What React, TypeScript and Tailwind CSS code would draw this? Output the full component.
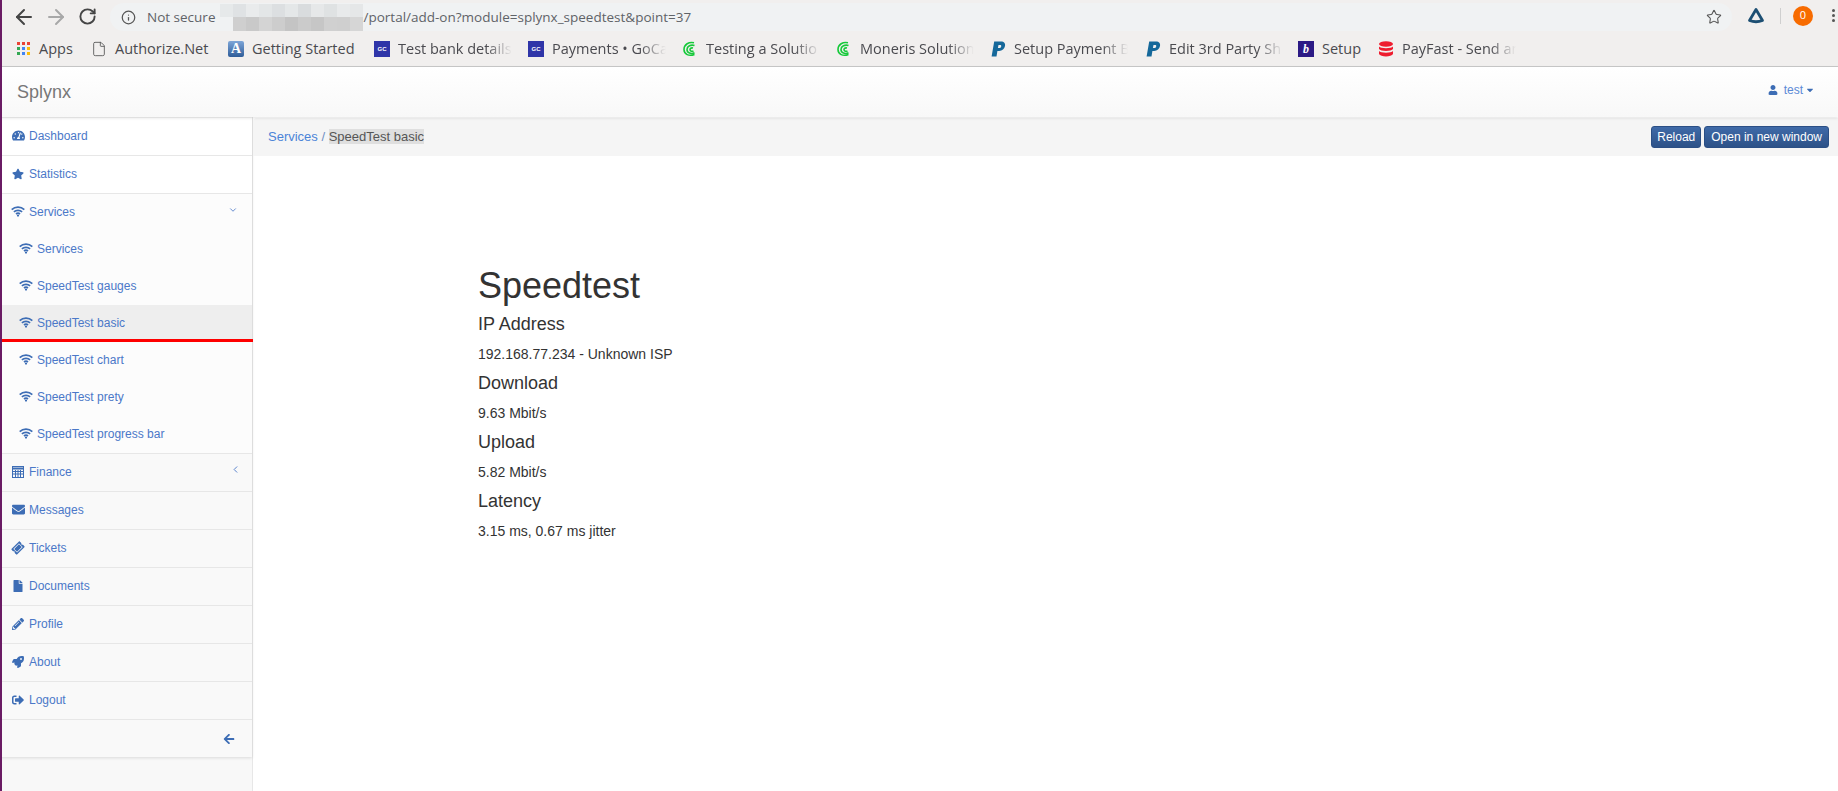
import { ArrowLeft, ArrowRight, RotateCw, Info, Star, File, ChevronDown, ChevronLeft } from 'lucide-react';
import {
    FaTachometerAlt,
    FaStar,
    FaEnvelope,
    FaTicketAlt,
    FaFile,
    FaPencilAlt,
    FaRocket,
    FaSignOutAlt,
    FaArrowLeft,
    FaUser,
    FaCaretDown,
} from 'react-icons/fa';
import type { ReactNode } from 'react';

function WifiIcon({ className = '' }: { className?: string }) {
    return (
        <svg width="14" height="11" viewBox="0 0 14 11" fill="none" stroke="#3d6db5" strokeWidth="1.7" className={className}>
            <path d="M0.7 3.6C4.2 0.3 9.8 0.3 13.3 3.6" />
            <path d="M2.9 5.9C5.2 3.8 8.8 3.8 11.1 5.9" />
            <path d="M5 8C6.1 7.1 7.9 7.1 9 8" />
            <circle cx="7" cy="9.6" r="1.1" fill="#3d6db5" stroke="none" />
        </svg>
    );
}

function CalcIcon() {
    return (
        <svg width="12" height="12" viewBox="0 0 12 12" fill="none" stroke="#3d6db5" strokeWidth="1">
            <rect x="0.5" y="0.5" width="11" height="11" />
            <path d="M1 2.5h10" strokeWidth="2" />
            <path d="M1 5.5h10M1 8h10M3.5 4V11M6 4V11M8.5 4V11" />
        </svg>
    );
}

function Favicon({ kind }: { kind: string }) {
    if (kind === 'apps') {
        const colors = ['#ea4335', '#ea4335', '#ea4335', '#34a853', '#4285f4', '#fbbc05', '#34a853', '#4285f4', '#fbbc05'];
        return (
            <span className="grid grid-cols-3 gap-[2px] w-[13px] h-[13px]">
                {colors.map((c, i) => (
                    <span key={i} className="w-[3px] h-[3px]" style={{ backgroundColor: c }} />
                ))}
            </span>
        );
    }
    if (kind === 'file') return <File size={16} strokeWidth={1.3} className="text-[#555]" />;
    if (kind === 'a')
        return (
            <span className="w-[16px] h-[16px] rounded-[2px] bg-gradient-to-b from-[#7ea6d8] to-[#2f5d99] text-white text-[14px] leading-[16px] text-center font-['Liberation_Serif',serif] font-bold">
                A
            </span>
        );
    if (kind === 'gc')
        return (
            <span className="w-[16px] h-[16px] bg-[#2f35a8] text-white text-[6px] leading-[16px] text-center font-bold font-['Liberation_Sans',sans-serif]">
                GC
            </span>
        );
    if (kind === 'moneris')
        return (
            <svg width="16" height="16" viewBox="0 0 16 16" fill="none" stroke="#16c93a" strokeWidth="1.6">
                <path d="M12 1.8C7 0.5 2 3.5 2 8.5s5 7 10.5 5" />
                <path d="M12.5 4.5C9 3.4 5 5 5 8.5s4 5 7.5 3.2" />
                <path d="M11 7C9 6.5 8 7.5 8 8.8s2 2 3.5 1" />
            </svg>
        );
    if (kind === 'paypal')
        return (
            <svg width="16" height="16" viewBox="0 0 16 16" fill="#15689a">
                <path
                    fillRule="evenodd"
                    d="M4.2 0.5H11c3 0 4.6 1.8 4 4.6C14.4 8.2 12.2 10 9.2 10H7.4L6.5 15.5H1.6ZM8.5 4 7.9 7H9c1.2 0 2-.7 2.2-1.6C11.4 4.5 10.9 4 10 4Z"
                />
            </svg>
        );
    if (kind === 'b')
        return (
            <span className="w-[16px] h-[16px] bg-[#2c1a85] text-white text-[12px] leading-[16px] text-center italic font-bold font-['Liberation_Serif',serif]">
                b
            </span>
        );
    return (
        <svg width="16" height="16" viewBox="0 0 16 16" fill="#ee1c2e">
            <ellipse cx="8" cy="3" rx="7" ry="2.8" />
            <path d="M1 5.5c1.5 2.2 12.5 2.2 14 0v2.6c-1.5 2.6-12.5 2.6-14 0z" />
            <path d="M1 10c1.5 2.2 12.5 2.2 14 0v3c-1.5 3.2-12.5 3.2-14 0z" />
        </svg>
    );
}

const bookmarks = [
    { kind: 'apps', label: 'Apps', w: 'w-[76px]' },
    { kind: 'file', label: 'Authorize.Net', w: 'w-[137px]' },
    { kind: 'a', label: 'Getting Started', w: 'w-[146px]' },
    { kind: 'gc', label: 'Test bank details', w: 'w-[154px]', fade: true },
    { kind: 'gc', label: 'Payments • GoCa', w: 'w-[154px]', fade: true },
    { kind: 'moneris', label: 'Testing a Solutio', w: 'w-[154px]', fade: true },
    { kind: 'moneris', label: 'Moneris Solution', w: 'w-[154px]', fade: true },
    { kind: 'paypal', label: 'Setup Payment B', w: 'w-[155px]', fade: true },
    { kind: 'paypal', label: 'Edit 3rd Party Sh', w: 'w-[153px]', fade: true },
    { kind: 'b', label: 'Setup', w: 'w-[80px]' },
    { kind: 'db', label: 'PayFast - Send an', w: 'w-[154px]', fade: true },
];

const blurTop = ['#e6e9ea', '#dfe2e4', '#e9ebec', '#e3e6e7', '#dcdfe1', '#e4e7e8', '#d9dcde', '#e6e8e9', '#dfe2e3', '#e8eaeb', '#e5e7e8'];
const blurBottom = ['#f0f2f3', '#cfcfcf', '#c9c9c9', '#d4d4d4', '#cdcdcd', '#c4c4c4', '#cbcbcb', '#c6c6c6', '#d0d0d0', '#cfcfcf', '#d6d6d6'];

function Bookmark({ kind, label, w, fade }: { kind: string; label: string; w: string; fade?: boolean }) {
    return (
        <div className={`flex items-center gap-[8px] shrink-0 ${w}`}>
            <span className="w-[16px] h-[16px] flex items-center justify-center shrink-0">
                <Favicon kind={kind} />
            </span>
            <span
                className={`text-[14.5px] text-[#4a4a4f] whitespace-nowrap ${
                    fade ? 'w-[114px] [mask-image:linear-gradient(to_left,transparent,black_26px)]' : ''
                }`}
            >
                {label}
            </span>
        </div>
    );
}

function NavRow({ icon, label, right, bordered = true }: { icon: ReactNode; label: string; right?: ReactNode; bordered?: boolean }) {
    return (
        <div className={`flex items-center pl-[11px] pr-[14px] pb-[2px] ${bordered ? 'h-[38px] border-b border-[#e7e7e7]' : 'h-[37px]'}`}>
            <span className="w-[14px] h-[14px] mr-[4px] flex items-center justify-center shrink-0">{icon}</span>
            <span className="flex-1">{label}</span>
            {right}
        </div>
    );
}

function SubRow({ label, active }: { label: string; active?: boolean }) {
    return (
        <div className={`h-[37px] pb-[2px] flex items-center pl-[19px] ${active ? 'bg-[#eeeeee]' : ''}`}>
            <WifiIcon className="mr-[4px]" />
            <span>{label}</span>
        </div>
    );
}

export default function App() {
    return (
        <div className="h-[791px] w-[1838px] overflow-hidden flex flex-col bg-white relative font-['Liberation_Sans',sans-serif]">
            {/* browser chrome */}
            <div className="h-[31px] bg-[#f1efee] flex items-center font-['Open_Sans',sans-serif] shrink-0">
                <div className="flex items-center pl-[12px] mt-[2px] w-[110px] shrink-0">
                    <ArrowLeft size={24} strokeWidth={2} className="text-[#454545]" />
                    <ArrowRight size={24} strokeWidth={2} className="ml-[8px] text-[#a8a8a8]" />
                    <RotateCw size={19} strokeWidth={2.4} className="ml-[10px] text-[#454545]" />
                </div>
                <div className="w-[1622px] h-[28px] mt-[3px] rounded-full bg-[#f0f2f3] flex items-center relative shrink-0">
                    <Info size={15} className="ml-[11px] text-[#555]" />
                    <span className="ml-[11px] text-[13.5px] text-[#5f6368]">Not secure</span>
                    <div className="ml-[5px] w-[143px] h-[27px] flex flex-col">
                        <div className="h-[13px] flex">
                            {blurTop.map((c, i) => (
                                <span key={i} className="w-[13px]" style={{ backgroundColor: c }} />
                            ))}
                        </div>
                        <div className="h-[14px] flex">
                            {blurBottom.map((c, i) => (
                                <span key={i} className="w-[13px]" style={{ backgroundColor: c }} />
                            ))}
                        </div>
                    </div>
                    <span className="text-[13.5px] text-[#5f6368]">/portal/add-on?module=splynx_speedtest&amp;point=37</span>
                    <Star size={16} strokeWidth={1.6} className="absolute right-[10px] top-[6px] text-[#555]" />
                </div>
                <div className="flex-1 flex items-center">
                    <svg width="18" height="18" viewBox="0 0 18 18" className="ml-[15px]" fill="none" stroke="#1d4f73" strokeWidth="2.8">
                        <path d="M9 2.5 L15.5 13.5 Q9 16 2.5 13.5 Z" strokeLinejoin="round" />
                    </svg>
                    <span className="w-px h-[16px] bg-[#cfcfcf] ml-[15px]" />
                    <span className="ml-[12px] w-[20px] h-[20px] rounded-full bg-[#f76b00] text-white text-[11px] flex items-center justify-center">0</span>
                    <span className="ml-[19px] flex flex-col gap-[2px]">
                        <span className="w-[3px] h-[3px] rounded-full bg-[#555]" />
                        <span className="w-[3px] h-[3px] rounded-full bg-[#555]" />
                        <span className="w-[3px] h-[3px] rounded-full bg-[#555]" />
                    </span>
                </div>
            </div>
            <div className="h-[36px] bg-[#f1efee] border-b border-[#c9c9c9] flex items-center pl-[15px] font-['Open_Sans',sans-serif] shrink-0">
                {bookmarks.map((b) => (
                    <Bookmark key={b.kind + b.label} {...b} />
                ))}
            </div>

            {/* app header */}
            <div className="h-[50px] bg-gradient-to-b from-white to-[#f8f8f8] flex items-center justify-between pl-[17px] pr-[23px] shadow-[0_1px_3px_rgba(0,0,0,0.12)] relative z-10 shrink-0">
                <span className="text-[18px] text-[#777]">Splynx</span>
                <span className="flex items-center text-[12px] text-[#5b8ad6] -mt-[5px]">
                    <FaUser size={10} className="mr-[6px] text-[#3d6db5]" />
                    test
                    <FaCaretDown size={10} className="ml-[2px] text-[#3d6db5]" />
                </span>
            </div>

            <div className="flex-1 flex min-h-0">
                {/* sidebar */}
                <div className="w-[253px] pt-[1px] bg-[#f8f8f8] border-r border-[#e7e7e7] shrink-0 text-[12px] text-[#4b78c8]">
                    <div className="shadow-[0_1px_3px_rgba(0,0,0,0.12)] bg-[#f9f9f9]">
                        <div className="bg-white">
                            <NavRow icon={<FaTachometerAlt size={13} className="text-[#3d6db5]" />} label="Dashboard" />
                            <NavRow icon={<FaStar size={12} className="text-[#3d6db5]" />} label="Statistics" />
                        </div>
                        <div className="bg-[#fcfcfc] border-b border-[#e7e7e7]">
                            <NavRow
                                icon={<WifiIcon />}
                                label="Services"
                                bordered={false}
                                right={<ChevronDown size={10} className="-mt-[4px]" />}
                            />
                            <SubRow label="Services" />
                            <SubRow label="SpeedTest gauges" />
                            <SubRow label="SpeedTest basic" active />
                            <div className="h-[3px] -mt-[3px] -mr-px relative bg-[#fe0000]" />
                            <SubRow label="SpeedTest chart" />
                            <SubRow label="SpeedTest prety" />
                            <SubRow label="SpeedTest progress bar" />
                        </div>
                        <NavRow icon={<CalcIcon />} label="Finance" right={<ChevronLeft size={11} className="-mt-[4px] -mr-[3px]" />} />
                        <NavRow icon={<FaEnvelope size={13} className="text-[#3d6db5]" />} label="Messages" />
                        <NavRow icon={<FaTicketAlt size={12} className="text-[#3d6db5] -rotate-45" />} label="Tickets" />
                        <NavRow icon={<FaFile size={12} className="text-[#3d6db5]" />} label="Documents" />
                        <NavRow icon={<FaPencilAlt size={12} className="text-[#3d6db5]" />} label="Profile" />
                        <NavRow icon={<FaRocket size={12} className="text-[#3d6db5]" />} label="About" />
                        <NavRow icon={<FaSignOutAlt size={12} className="text-[#3d6db5]" />} label="Logout" />
                        <div className="h-[37px] flex items-center justify-end pr-[17px]">
                            <FaArrowLeft size={12} className="text-[#3d6db5]" />
                        </div>
                    </div>
                </div>

                {/* content */}
                <div className="flex-1 min-w-0 pt-[1px]">
                    <div className="h-[38px] bg-[#f5f5f5] rounded-tl-[4px] flex items-center justify-between pl-[15px] pr-[9px]">
                        <div className="text-[13px]">
                            <span className="text-[#4b84d8]">Services</span>
                            <span className="text-[#6f8fc4]"> / </span>
                            <span className="text-[#555] bg-[#dfdfdf]">SpeedTest basic</span>
                        </div>
                        <div className="flex gap-[3px]">
                            <button className="h-[22px] px-[5px] text-[12px] text-white rounded-[3px] border border-[#2b4f85] bg-gradient-to-b from-[#3f6aa8] to-[#2d5288]">Reload</button>
                            <button className="h-[22px] px-[6px] text-[12px] text-white rounded-[3px] border border-[#2b4f85] bg-gradient-to-b from-[#3f6aa8] to-[#2d5288]">Open in new window</button>
                        </div>
                    </div>
                    <div className="pl-[225px] pt-[110px] text-[#333]">
                        <h1 className="text-[36px] leading-[40px]">Speedtest</h1>
                        <h4 className="text-[18px] leading-[20px] mt-[8px]">IP Address</h4>
                        <p className="text-[14px] leading-[20px] mt-[10px]">192.168.77.234 - Unknown ISP</p>
                        <h4 className="text-[18px] leading-[20px] mt-[9px]">Download</h4>
                        <p className="text-[14px] leading-[20px] mt-[10px]">9.63 Mbit/s</p>
                        <h4 className="text-[18px] leading-[20px] mt-[9px]">Upload</h4>
                        <p className="text-[14px] leading-[20px] mt-[10px]">5.82 Mbit/s</p>
                        <h4 className="text-[18px] leading-[20px] mt-[9px]">Latency</h4>
                        <p className="text-[14px] leading-[20px] mt-[10px]">3.15 ms, 0.67 ms jitter</p>
                    </div>
                </div>
            </div>

            {/* purple edge of the window behind */}
            <div className="absolute left-0 top-0 bottom-0 w-[2px] bg-[#6a1b64] z-20" />
        </div>
    );
}
